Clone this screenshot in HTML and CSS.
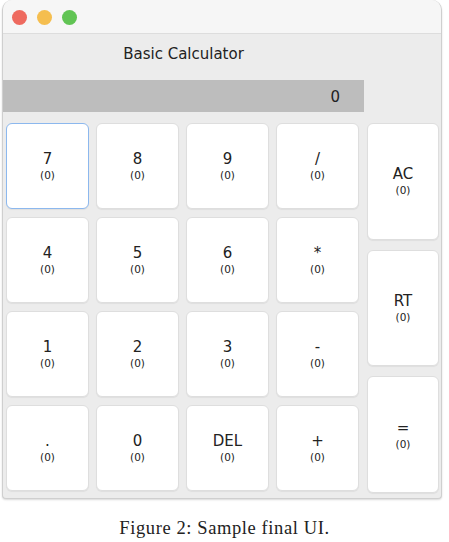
FILE: index.html
```html
<!DOCTYPE html>
<html lang="en">
<head>
  <meta charset="UTF-8">
  <title>Basic Calculator</title>
  <link rel="stylesheet" href="styles.css">
</head>
<body>
  <div class="window">
    <div class="titlebar">
      <span class="light red"></span>
      <span class="light yellow"></span>
      <span class="light green"></span>
    </div>
    <div class="content">
      <div class="top">
        <div class="title">Basic Calculator</div>
        <div class="display">0</div>
      </div>
      <div class="keys">
        <div class="pad">
          <button class="key focus"><span class="label">7</span><span class="count">(0)</span></button>
          <button class="key"><span class="label">8</span><span class="count">(0)</span></button>
          <button class="key"><span class="label">9</span><span class="count">(0)</span></button>
          <button class="key"><span class="label">/</span><span class="count">(0)</span></button>
          <button class="key"><span class="label">4</span><span class="count">(0)</span></button>
          <button class="key"><span class="label">5</span><span class="count">(0)</span></button>
          <button class="key"><span class="label">6</span><span class="count">(0)</span></button>
          <button class="key"><span class="label">*</span><span class="count">(0)</span></button>
          <button class="key"><span class="label">1</span><span class="count">(0)</span></button>
          <button class="key"><span class="label">2</span><span class="count">(0)</span></button>
          <button class="key"><span class="label">3</span><span class="count">(0)</span></button>
          <button class="key"><span class="label">-</span><span class="count">(0)</span></button>
          <button class="key"><span class="label">.</span><span class="count">(0)</span></button>
          <button class="key"><span class="label">0</span><span class="count">(0)</span></button>
          <button class="key"><span class="label">DEL</span><span class="count">(0)</span></button>
          <button class="key"><span class="label">+</span><span class="count">(0)</span></button>
        </div>
        <div class="side">
          <button class="key"><span class="label">AC</span><span class="count">(0)</span></button>
          <button class="key"><span class="label">RT</span><span class="count">(0)</span></button>
          <button class="key"><span class="label">=</span><span class="count">(0)</span></button>
        </div>
      </div>
    </div>
  </div>
  <p class="caption">Figure 2: Sample final UI.</p>
</body>
</html>
```

FILE: styles.css
```css
body {
  margin: 0;
  background: #fff;
  font-family: "DejaVu Sans", "Open Sans", sans-serif;
  color: #222;
}
.window {
  margin-left: 2px;
  width: 438px;
  height: 498px;
  border: 1px solid #cfcfcf;
  border-top: none;
  border-radius: 10px 10px 4px 4px;
  background: #ececec;
  overflow: hidden;
  box-shadow: 0 1px 2px rgba(0,0,0,0.15);
}
.titlebar {
  height: 33px;
  background: #f6f6f6;
  border-bottom: 1px solid #dddddd;
  display: flex;
  align-items: center;
  gap: 10px;
  padding-left: 9px;
}
.light {
  width: 15px;
  height: 15px;
  border-radius: 50%;
  margin-top: 1px;
}
.red { background: #ee6a5f; }
.yellow { background: #f5be4f; }
.green { background: #61c454; }
.top {
  width: 361px;
}
.title {
  height: 40px;
  line-height: 40px;
  margin-bottom: 6px;
  text-align: center;
  font-size: 15px;
}
.display {
  height: 32px;
  line-height: 34px;
  background: #bdbdbd;
  text-align: right;
  padding-right: 24px;
  font-size: 15px;
}
.keys {
  display: flex;
  gap: 8px;
  padding: 11px 0 0 3px;
}
.pad {
  display: grid;
  grid-template-columns: repeat(4, 83px);
  grid-template-rows: repeat(4, 86px);
  column-gap: 7px;
  row-gap: 8px;
}
.side {
  width: 72px;
  height: 370px;
  display: flex;
  flex-direction: column;
  gap: 10px;
}
.side .key {
  flex: 1;
}
.key {
  display: flex;
  flex-direction: column;
  align-items: center;
  justify-content: center;
  background: #fff;
  border: 1px solid #dedede;
  border-radius: 6px;
  font-family: inherit;
  color: #222;
  padding: 0;
  box-shadow: 0 1px 1px rgba(0,0,0,0.06);
}
.key.focus {
  border: 1.5px solid #8cb8ee;
}
.label {
  font-size: 15px;
  line-height: 18px;
}
.count {
  font-size: 10.5px;
  line-height: 14px;
}
.caption {
  margin: 19px 0 0;
  text-align: center;
  font-family: "Liberation Serif", "DejaVu Serif", serif;
  font-size: 18.5px;
  letter-spacing: 0.6px;
  color: #222;
}
```
